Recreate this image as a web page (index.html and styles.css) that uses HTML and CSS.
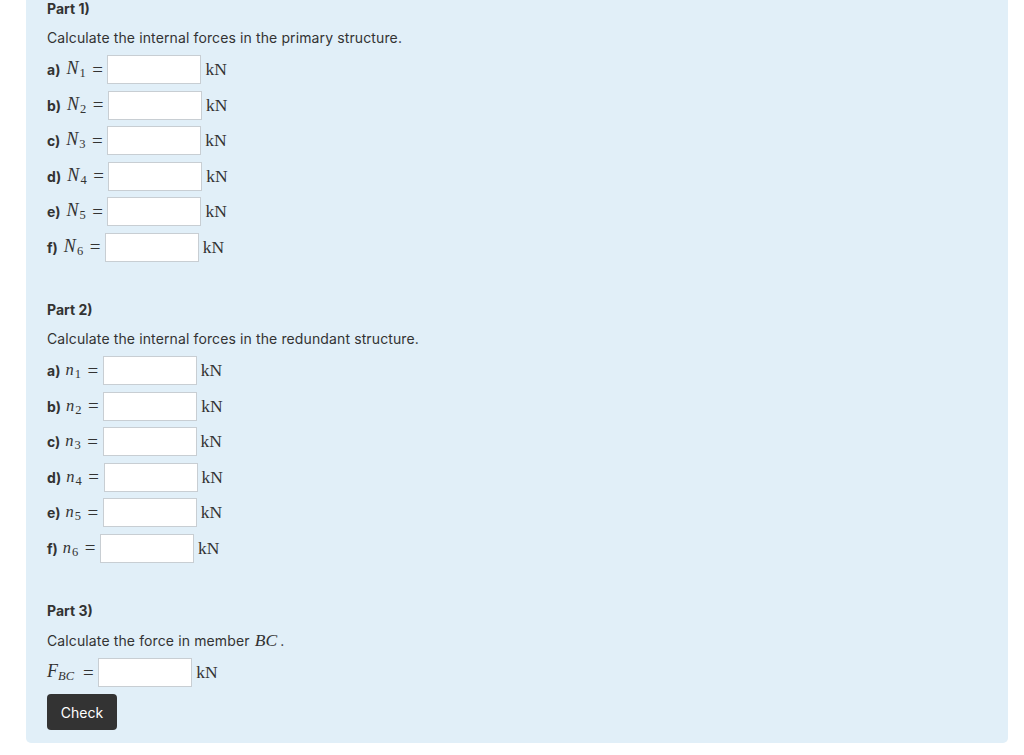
FILE: index.html
```html
<!DOCTYPE html>
<html>
<head>
<meta charset="utf-8">
<link rel="stylesheet" href="styles.css">
</head>
<body>
<div class="panel">
  <section class="part">
    <div class="title">Part 1)</div>
    <div class="prompt">Calculate the internal forces in the primary structure.</div>
    <div class="rows">
      <div class="row"><b class="lbl">a)</b><span class="m"><i class="v">N</i><sub>1</sub></span><span class="eq">=</span><span class="inp"></span><span class="unit">kN</span></div>
      <div class="row"><b class="lbl">b)</b><span class="m"><i class="v">N</i><sub>2</sub></span><span class="eq">=</span><span class="inp"></span><span class="unit">kN</span></div>
      <div class="row"><b class="lbl">c)</b><span class="m"><i class="v">N</i><sub>3</sub></span><span class="eq">=</span><span class="inp"></span><span class="unit">kN</span></div>
      <div class="row"><b class="lbl">d)</b><span class="m"><i class="v">N</i><sub>4</sub></span><span class="eq">=</span><span class="inp"></span><span class="unit">kN</span></div>
      <div class="row"><b class="lbl">e)</b><span class="m"><i class="v">N</i><sub>5</sub></span><span class="eq">=</span><span class="inp"></span><span class="unit">kN</span></div>
      <div class="row"><b class="lbl">f)</b><span class="m"><i class="v">N</i><sub>6</sub></span><span class="eq">=</span><span class="inp"></span><span class="unit">kN</span></div>
    </div>
  </section>
  <section class="part">
    <div class="title">Part 2)</div>
    <div class="prompt">Calculate the internal forces in the redundant structure.</div>
    <div class="rows">
      <div class="row"><b class="lbl tight">a)</b><span class="m"><i class="v sm">n</i><sub>1</sub></span><span class="eq">=</span><span class="inp"></span><span class="unit">kN</span></div>
      <div class="row"><b class="lbl tight">b)</b><span class="m"><i class="v sm">n</i><sub>2</sub></span><span class="eq">=</span><span class="inp"></span><span class="unit">kN</span></div>
      <div class="row"><b class="lbl tight">c)</b><span class="m"><i class="v sm">n</i><sub>3</sub></span><span class="eq">=</span><span class="inp"></span><span class="unit">kN</span></div>
      <div class="row"><b class="lbl tight">d)</b><span class="m"><i class="v sm">n</i><sub>4</sub></span><span class="eq">=</span><span class="inp"></span><span class="unit">kN</span></div>
      <div class="row"><b class="lbl tight">e)</b><span class="m"><i class="v sm">n</i><sub>5</sub></span><span class="eq">=</span><span class="inp"></span><span class="unit">kN</span></div>
      <div class="row"><b class="lbl tight">f)</b><span class="m"><i class="v sm">n</i><sub>6</sub></span><span class="eq">=</span><span class="inp"></span><span class="unit">kN</span></div>
    </div>
  </section>
  <section class="part">
    <div class="title">Part 3)</div>
    <div class="prompt">Calculate the force in member <i class="inl">BC</i>.</div>
    <div class="rows">
      <div class="row"><span class="m"><i class="v">F</i><sub class="isub">BC</sub></span><span class="eq wide">=</span><span class="inp"></span><span class="unit">kN</span></div>
    </div>
    <button class="btn">Check</button>
  </section>
</div>
</body>
</html>
```
FILE: styles.css
```css
html, body {
  margin: 0;
  padding: 0;
  background: #fff;
}
body {
  font-family: Inter, "Liberation Sans", Arial, sans-serif;
  font-size: 14px;
  color: #333;
}
.panel {
  margin-left: 26px;
  width: 982px;
  background: #e1eff8;
  border-radius: 0 0 5px 5px;
  padding: 0 21px 13px;
  box-sizing: border-box;
  display: flow-root;
}
.part + .part {
  margin-top: 39.5px;
}
.title {
  font-weight: 700;
  line-height: 18px;
}
.prompt {
  line-height: 20px;
  margin-top: 10px;
  letter-spacing: 0.12px;
}
.rows {
  margin-top: 7px;
  display: flex;
  flex-direction: column;
  gap: 6.5px;
}
.row {
  display: flex;
  align-items: center;
  height: 29px;
}
.lbl {
  font-weight: 700;
  margin-right: 6px;
}
.lbl.tight {
  margin-right: 5px;
}
.m {
  font-family: "Liberation Serif", "Times New Roman", serif;
  font-size: 18px;
  white-space: nowrap;
}
.v {
  font-style: italic;
}
.v.sm {
  font-size: 16.5px;
}
.inl {
  font-family: "Liberation Serif", "Times New Roman", serif;
  font-size: 17.5px;
  margin: 0 3px 0 1px;
}
.m sub {
  font-size: 12.5px;
  vertical-align: -3px;
  margin-left: 1px;
}
.m sub.isub {
  font-style: italic;
  margin-left: 0;
}
.eq {
  font-family: "Liberation Serif", "Times New Roman", serif;
  font-size: 19px;
  margin: 0 4.5px 0 6.5px;
}
.eq.wide {
  margin-left: 9px;
}
.inp {
  display: block;
  width: 94px;
  height: 29px;
  box-sizing: border-box;
  background: #fff;
  border: 1px solid #c8ced3;
}
.unit {
  font-family: "Liberation Serif", "Times New Roman", serif;
  font-size: 17.5px;
  margin-left: 4px;
}
.btn {
  display: block;
  margin-top: 7px;
  width: 70px;
  height: 36px;
  background: #333;
  color: #fff;
  border: 0;
  border-radius: 4px;
  font-family: Inter, "Liberation Sans", Arial, sans-serif;
  font-size: 14px;
  padding: 0;
}
```
